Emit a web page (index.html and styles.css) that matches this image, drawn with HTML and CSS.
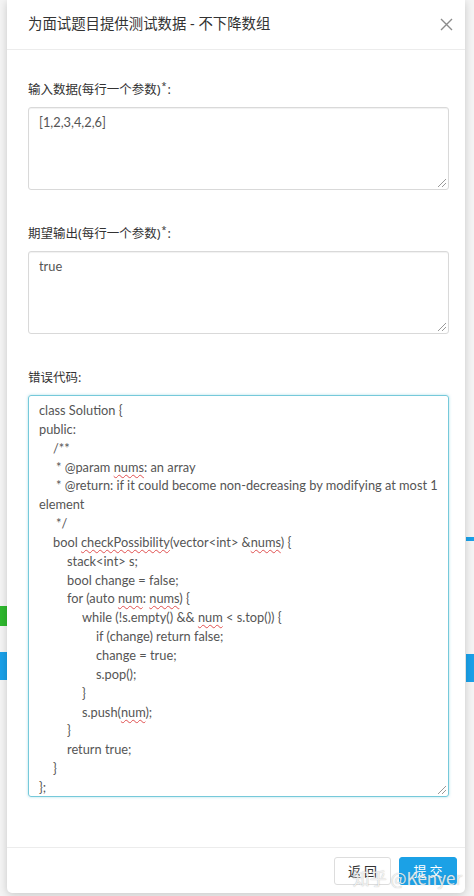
FILE: index.html
```html
<!DOCTYPE html>
<html lang="zh-CN">
  <head>
    <meta charset="UTF-8" />
    <meta name="viewport" content="width=device-width, initial-scale=1.0" />
    <title>为面试题目提供测试数据</title>
    <link rel="stylesheet" href="styles.css">
  </head>
  <body>
    <!-- 背后的页面，只露出左右两条边 -->
    <div class="page-edge left">
      <i class="bit green"></i>
      <i class="bit blue"></i>
    </div>
    <div class="page-edge right">
      <i class="bit blue small"></i>
      <i class="bit blue"></i>
    </div>

    <div class="modal">
      <div class="modal-header">
        <h4>为面试题目提供测试数据 - 不下降数组</h4>
        <span class="close">
          <svg width="13" height="13" viewBox="0 0 13 13">
            <path d="M1 1 L12 12 M12 1 L1 12" stroke="#8c8c8c" stroke-width="1.4" fill="none" />
          </svg>
        </span>
      </div>

      <div class="modal-body">
        <div class="field">
          <label>输入数据(每行一个参数)<sup>*</sup>:</label>
          <div class="box short">[1,2,3,4,2,6]<span class="grip"></span></div>
        </div>
        <div class="field">
          <label>期望输出(每行一个参数)<sup>*</sup>:</label>
          <div class="box short">true<span class="grip"></span></div>
        </div>
        <div class="field">
          <label>错误代码:</label>
          <div class="box code focus">
            <div>class Solution {</div>
            <div>public:</div>
            <div class="i1">/**</div>
            <div class="ic">* @param <u>nums</u>: an array</div>
            <div class="ic">* @return: if it could become non-decreasing by modifying at most 1 element</div>
            <div class="ic">*/</div>
            <div class="i1">bool <u>checkPossibility</u>(vector&lt;int&gt; &amp;<u>nums</u>) {</div>
            <div class="i2">stack&lt;int&gt; s;</div>
            <div class="i2">bool change = false;</div>
            <div class="i2">for (auto <u>num</u>: <u>nums</u>) {</div>
            <div class="i3">while (!s.empty() &amp;&amp; <u>num</u> &lt; s.top()) {</div>
            <div class="i4">if (change) return false;</div>
            <div class="i4">change = true;</div>
            <div class="i4">s.pop();</div>
            <div class="i3">}</div>
            <div class="i3">s.push(<u>num</u>);</div>
            <div class="i2">}</div>
            <div class="i2">return true;</div>
            <div class="i1">}</div>
            <div>};</div>
            <span class="grip"></span>
          </div>
        </div>
      </div>

      <div class="modal-footer">
        <button class="btn">返 回</button>
        <button class="btn primary">提 交</button>
        <span class="watermark">知乎 @Kenyer</span>
      </div>
    </div>
  </body>
</html>
```

FILE: styles.css
```css
* {
  margin: 0;
  padding: 0;
  box-sizing: border-box;
}
body {
  width: 474px;
  height: 896px;
  overflow: hidden;
  position: relative;
  background-color: #f4f4f4;
  font-family: "Noto Sans", "Noto Sans CJK SC", sans-serif;
  color: #333;
}

.page-edge {
  position: absolute;
  top: 0;
  width: 8px;
  height: 896px;
}
.page-edge.left {
  left: 0;
}
.page-edge.right {
  right: 0;
}
.bit {
  position: absolute;
  display: block;
  left: 0;
  width: 100%;
}
.left .green {
  top: 606px;
  height: 20px;
  background-color: #2eb82e;
}
.left .blue {
  top: 652px;
  height: 28px;
  background-color: #1aa0e8;
}
.right .blue.small {
  top: 537px;
  height: 4px;
}
.right .blue {
  top: 654px;
  height: 28px;
  background-color: #1aa0e8;
}

.modal {
  position: absolute;
  top: 0;
  left: 7px;
  width: 458px;
  height: 893px;
  background-color: #fff;
  border-radius: 0 0 5px 5px;
  box-shadow: 0 2px 8px rgba(0, 0, 0, 0.18);
  display: flex;
  flex-direction: column;
}

.modal-header {
  height: 50px;
  display: flex;
  align-items: center;
  justify-content: space-between;
  padding: 0 12px 1px 21px;
  border-bottom: 1px solid #ececec;
}
.modal-header h4 {
  font-size: 14.4px;
  font-weight: normal;
  color: #333;
  line-height: 20px;
}
.close {
  display: flex;
}

.modal-body {
  flex: 1;
  padding: 30px 16px 0 21px;
}
.field {
  margin-bottom: 34px;
}
.field label {
  display: block;
  font-size: 12.5px;
  line-height: 20px;
  color: #333;
  margin-bottom: 7px;
}
.field label sup {
  font-size: 9px;
  vertical-align: top;
  position: relative;
  top: -4px;
  margin: 0 1px;
}

.box {
  position: relative;
  width: 421px;
  border: 1px solid #d9d9d9;
  border-radius: 3px;
  box-shadow: inset 0 1px 1px rgba(0, 0, 0, 0.06);
  padding: 5px 6px 5px 10px;
  font-family: Lato, "Noto Sans", sans-serif;
  font-size: 12.8px;
  line-height: 19px;
  color: #555;
}
.box.short {
  height: 83px;
}
.box.code {
  height: 402px;
  padding-top: 5px;
  line-height: 18.85px;
}
.box.focus {
  border-color: #76c9da;
  box-shadow: 0 0 3px rgba(118, 201, 218, 0.6);
}
.i1 { text-indent: 14px; }
.i2 { text-indent: 28px; }
.i3 { text-indent: 43px; }
.i4 { text-indent: 57px; }
.ic { text-indent: 17px; }
.box u {
  text-decoration: underline wavy #e05050;
  text-decoration-thickness: 1px;
  text-underline-offset: 2px;
}
.grip {
  position: absolute;
  right: 2px;
  bottom: 2px;
  width: 8px;
  height: 8px;
  background: linear-gradient(135deg, transparent 45%, #999 45%, #999 52%, transparent 52%, transparent 72%, #999 72%, #999 79%, transparent 79%);
}

.modal-footer {
  position: relative;
  height: 46px;
  border-top: 1px solid #ececec;
  display: flex;
  justify-content: flex-end;
  align-items: center;
  gap: 8px;
  padding: 0 8px 0 0;
}
.btn {
  width: 57px;
  height: 28px;
  font-size: 13px;
  font-family: "Noto Sans CJK SC", sans-serif;
  color: #333;
  background-color: #fff;
  border: 1px solid #ddd;
  border-radius: 3px;
}
.btn.primary {
  width: 58px;
  color: #fff;
  background-color: #1ba1e6;
  border-color: #1ba1e6;
}
.watermark {
  position: absolute;
  right: 3px;
  top: 17px;
  font-size: 17px;
  color: rgba(255, 255, 255, 0.8);
  text-shadow: 0 0 1px rgba(120, 120, 120, 0.6);
  font-family: "Noto Sans CJK SC", sans-serif;
}
```
